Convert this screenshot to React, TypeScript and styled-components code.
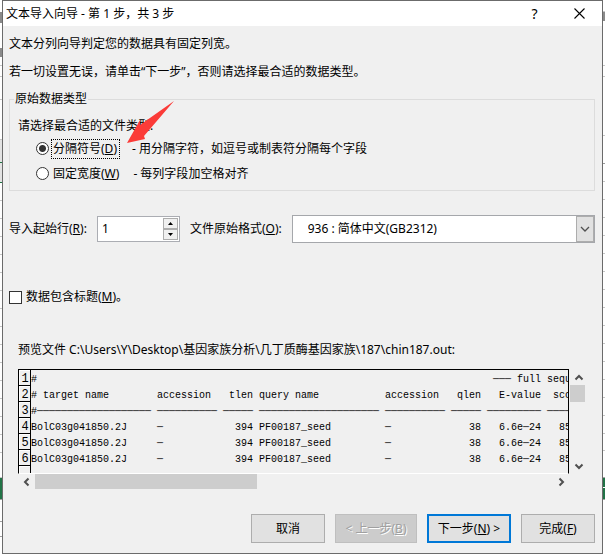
import React from "react";
import styled, { createGlobalStyle, css } from "styled-components";

const GlobalStyle = createGlobalStyle`
  * { box-sizing: border-box; }
  html, body, #root { height: 100%; }
  body {
    margin: 0;
    overflow: hidden;
    background: #fff;
    color: #000;
    font: 12px/16px "Noto Sans", "Noto Sans CJK SC", sans-serif;
  }
  button, input, select { font: inherit; color: inherit; }
`;

const Desktop = styled.div`
  display: flex;
  min-height: 100vh;
  padding-bottom: 2px;
`;

const Gutter = styled.div`
  flex: none;
  width: 2px;
  display: flex;
  flex-direction: column;
  background: #fff;
`;

const Cell = styled.div<{ $h: number; $fill: string; $line: string }>`
  flex: none;
  height: ${(p) => p.$h}px;
  background: ${(p) => p.$fill};
  border-bottom: 1px solid ${(p) => p.$line};
`;

const Dialog = styled.main`
  flex: 1;
  min-width: 0;
  display: flex;
  flex-direction: column;
  background: #f0f0f0;
  border: 1px solid #6b6b6b;
`;

const TitleBar = styled.header`
  display: flex;
  align-items: center;
  height: 25px;
  padding-left: 3px;
  background: #fff;
`;

const Title = styled.h1`
  flex: 1;
  margin: 0;
  font: inherit;
`;

const CaptionButton = styled.button`
  width: 45px;
  height: 25px;
  padding: 0;
  border: 0;
  background: none;
  font-size: 14px;
  display: grid;
  place-items: center;
`;

const Body = styled.form`
  flex: 1;
  display: flex;
  flex-direction: column;
  padding: 10px 7px 10px 6px;
`;

const Intro = styled.div`
  display: grid;
  gap: 12px;
  margin-bottom: 11px;
`;

const Note = styled.p`
  margin: 0;
`;

const Group = styled.fieldset`
  margin: 0;
  padding: 11px 8px 4px;
  border: 1px solid #dcdcdc;
  min-width: 0;
`;

const Legend = styled.legend`
  padding: 0 1px;
  margin-left: -4px;
`;

const Options = styled.div`
  padding: 2px 0 0 18px;
`;

const Option = styled.div`
  display: flex;
  align-items: center;
  height: 25px;
`;

const OptionLabel = styled.label<{ $focused?: boolean }>`
  min-width: 69px;
  padding: 1px;
  margin-left: 2px;
  border: 1px dotted ${(p) => (p.$focused ? "#000" : "transparent")};
`;

const OptionHint = styled.span`
  margin-left: 12px;
`;

const Radio = styled.input.attrs({ type: "radio" })`
  appearance: none;
  flex: none;
  width: 13px;
  height: 13px;
  margin: 0;
  border: 1px solid #333;
  border-radius: 50%;
  background: #fff;
  &:checked {
    background: radial-gradient(circle, #333 0 3px, #fff 4px);
  }
`;

const Check = styled.input.attrs({ type: "checkbox" })`
  appearance: none;
  flex: none;
  width: 13px;
  height: 13px;
  margin: 0;
  border: 1px solid #333;
  background: #fff;
`;

const FieldRow = styled.div`
  display: flex;
  align-items: center;
  gap: 10px;
  margin-top: 24px;
`;

const Spin = styled.div`
  display: flex;
  width: 83px;
  height: 26px;
  flex: none;
  border: 1px solid #abadb3;
  background: #fff;
`;

const SpinInput = styled.input`
  flex: 1;
  min-width: 0;
  padding: 0 4px;
  border: 0;
  background: none;
`;

const SpinButtons = styled.div`
  display: grid;
  grid-template-rows: 1fr 1fr;
  width: 17px;
  padding: 1px;
`;

const SpinButton = styled.button`
  padding: 0;
  border: 1px solid #adadad;
  background: #f0f0f0;
  display: grid;
  place-items: center;
`;

const SelectBox = styled.div`
  flex: 1;
  min-width: 0;
  display: grid;
  grid-template-columns: 1fr 18px;
  height: 28px;
  border: 1px solid #a5a7ab;
  background: #fff;
`;

const Select = styled.select`
  grid-area: 1 / 1 / 2 / 3;
  appearance: none;
  width: 100%;
  border: 0;
  padding: 0 24px 0 15px;
  background: none;
`;

const SelectArrow = styled.span`
  grid-area: 1 / 2 / 2 / 3;
  pointer-events: none;
  display: grid;
  place-items: center;
  border: 1px solid #adadad;
  background: #e1e1e1;
`;

const CheckRow = styled.div`
  display: flex;
  align-items: center;
  gap: 4px;
  margin-top: 46px;
`;

const PreviewTitle = styled.h2`
  margin: 37px 0 0 9px;
  font: inherit;
`;

const Preview = styled.section`
  display: grid;
  grid-template-columns: 1fr 17px;
  grid-template-rows: 105px 15px;
  margin: 11px 9px 0;
`;

const PreviewPane = styled.div`
  overflow: hidden;
  border: 1px solid #000;
  border-bottom-color: #fff;
`;

const DataTable = styled.table`
  border-collapse: separate;
  border-spacing: 0;
  font: 10px/12px "Liberation Mono", monospace;
`;

const RowHead = styled.th`
  min-width: 12px;
  height: 16px;
  padding: 3px 1px 0 2px;
  border: solid #000;
  border-width: 0 1px 1px 0;
  box-shadow: inset 1px 1px #fff;
  font-weight: 400;
  font-size: 12px;
`;

const RowText = styled.td`
  padding: 4px 0 0;
  white-space: pre;
  vertical-align: top;
`;

const Scroll = styled.div<{ $horizontal?: boolean }>`
  display: flex;
  flex-direction: ${(p) => (p.$horizontal ? "row" : "column")};
  ${(p) => !p.$horizontal && css`padding: 1px 0 1px 1px;`}
`;

const ScrollButton = styled.button`
  flex: none;
  width: 17px;
  height: 15px;
  padding: 0;
  border: 0;
  background: none;
  display: grid;
  place-items: center;
`;

const Track = styled.div`
  flex: 1;
`;

const Thumb = styled.div<{ $horizontal?: boolean }>`
  background: #cdcdcd;
  width: ${(p) => (p.$horizontal ? "43%" : "15px")};
  height: ${(p) => (p.$horizontal ? "15px" : "17px")};
`;

const Actions = styled.footer`
  display: flex;
  justify-content: flex-end;
  gap: 10px;
  margin-top: auto;
`;

const Action = styled.button<{ $primary?: boolean }>`
  width: ${(p) => (p.$primary ? 84 : 74)}px;
  height: 29px;
  padding: 0;
  border: ${(p) => (p.$primary ? "2px solid #0078d7" : "1px solid #adadad")};
  background: #e1e1e1;
  &:disabled {
    width: 82px;
    color: #a0a0a0;
    border-color: #bfbfbf;
    background: #ccc;
    text-shadow: 1px 1px #fff;
  }
`;

const Pointer = styled.svg`
  position: absolute;
  left: 127px;
  top: 101px;
  pointer-events: none;
`;

const rule = (n: number) => "─".repeat(n);

const lines = [
  "#" + " ".repeat(76) + "─── full sequ",
  "# target name        accession   tlen query name           accession   qlen   E-value  sco",
  "#" + [19, 10, 5, 20, 10, 5, 9, 4].map(rule).join(" "),
  ...Array(3).fill(
    "BolC03g041850.2J     ─            394 PF00187_seed         ─             38   6.6e─24   85",
  ),
  "",
];

type Band = [height: number, fill: string, line: string];

const gridRows: Band[] = Array.from({ length: 15 }, () => [18, "#fff", "#c6c6c6"]);

const leftBands: Band[] = [
  [12, "#fff", "#fff"],
  [12, "#8a8a8a", "#fff"],
  [24, "#fff", "#fff"],
  [10, "#8a8a8a", "#fff"],
  [8, "#fff", "#c6c6c6"],
  [11, "#fff", "#c6c6c6"],
  [23, "#fff", "#c6c6c6"],
  [40, "#fff", "#c6c6c6"],
  [23, "#e3e3e3", "#217346"],
  [20, "#e3e3e3", "#217346"],
  ...gridRows,
  [25, "#fff", "#c6c6c6"],
  [22, "#217346", "#a0a0a0"],
  [22, "#fff", "#a0a0a0"],
  [15, "#fff", "#a0a0a0"],
];

const rightBands: Band[] = [
  [12, "#fff", "#c6c6c6"],
  [10, "#8a8a8a", "#fff"],
  [44, "#fff", "#c6c6c6"],
  [11, "#fff", "#c6c6c6"],
  [59, "#fff", "#c6c6c6"],
  [28, "#fff", "#9a9a9a"],
  ...gridRows,
  [17, "#fff", "#c6c6c6"],
  [27, "#fff", "#a0a0a0"],
  [10, "#217346", "#fff"],
  [12, "#217346", "#a0a0a0"],
];

const Strip = ({ bands }: { bands: Band[] }) => (
  <Gutter>
    {bands.map(([h, fill, line], i) => (
      <Cell key={i} $h={h} $fill={fill} $line={line} />
    ))}
  </Gutter>
);

const Chevron = ({ turn = 0, heavy = false }: { turn?: number; heavy?: boolean }) => (
  <svg width="10" height="10" viewBox="0 0 10 10" fill="none" stroke="#505050" strokeWidth={heavy ? 2 : 1.3}>
    <path d={heavy ? "M1.500 3.500L5 7l3.500-3.500" : "M1 3l4 4 4-4"} transform={`rotate(${turn} 5 5)`} />
  </svg>
);

const Triangle = ({ up }: { up?: boolean }) => (
  <svg width="5" height="3" viewBox="0 0 5 3">
    <path d={up ? "M0 3L2.500 0 5 3z" : "M0 0h5L2.500 3z"} />
  </svg>
);

export default function App() {
  return (
    <>
      <GlobalStyle />
      <Desktop>
        <Strip bands={leftBands} />
        <Dialog>
          <TitleBar>
            <Title>文本导入向导 - 第 1 步，共 3 步</Title>
            <CaptionButton type="button" aria-label="帮助">?</CaptionButton>
            <CaptionButton type="button" aria-label="关闭">
              <svg width="11" height="11" viewBox="0 0 11 11" stroke="#000" strokeWidth="1.1">
                <path d="M.5.5l10 10M10.500.5l-10 10" />
              </svg>
            </CaptionButton>
          </TitleBar>
          <Body onSubmit={(e) => e.preventDefault()}>
            <Intro>
              <Note>文本分列向导判定您的数据具有固定列宽。</Note>
              <Note>若一切设置无误，请单击“下一步”，否则请选择最合适的数据类型。</Note>
            </Intro>
            <Group>
              <Legend>原始数据类型</Legend>
              <div>请选择最合适的文件类型:</div>
              <Options>
                <Option>
                  <Radio id="delimited" name="kind" defaultChecked />
                  <OptionLabel htmlFor="delimited" $focused>分隔符号(<u>D</u>)</OptionLabel>
                  <OptionHint>- 用分隔字符，如逗号或制表符分隔每个字段</OptionHint>
                </Option>
                <Option>
                  <Radio id="fixed" name="kind" />
                  <OptionLabel htmlFor="fixed">固定宽度(<u>W</u>)</OptionLabel>
                  <OptionHint>- 每列字段加空格对齐</OptionHint>
                </Option>
              </Options>
            </Group>
            <FieldRow>
              <label htmlFor="start">导入起始行(<u>R</u>):</label>
              <Spin>
                <SpinInput id="start" defaultValue="1" />
                <SpinButtons>
                  <SpinButton type="button" aria-label="增加"><Triangle up /></SpinButton>
                  <SpinButton type="button" aria-label="减少"><Triangle /></SpinButton>
                </SpinButtons>
              </Spin>
              <label htmlFor="origin">文件原始格式(<u>O</u>):</label>
              <SelectBox>
                <Select id="origin"><option>936 : 简体中文(GB2312)</option></Select>
                <SelectArrow><Chevron /></SelectArrow>
              </SelectBox>
            </FieldRow>
            <CheckRow>
              <Check id="headers" />
              <label htmlFor="headers">数据包含标题(<u>M</u>)。</label>
            </CheckRow>
            <PreviewTitle>预览文件 C:\Users\Y\Desktop\基因家族分析\几丁质酶基因家族\187\chin187.out:</PreviewTitle>
            <Preview>
              <PreviewPane>
                <DataTable>
                  <tbody>
                    {lines.map((text, i) => (
                      <tr key={i}>
                        <RowHead scope="row">{i < 6 ? i + 1 : ""}</RowHead>
                        <RowText>{text}</RowText>
                      </tr>
                    ))}
                  </tbody>
                </DataTable>
              </PreviewPane>
              <Scroll>
                <ScrollButton type="button" aria-label="向上"><Chevron turn={180} heavy /></ScrollButton>
                <Track><Thumb /></Track>
                <ScrollButton type="button" aria-label="向下"><Chevron heavy /></ScrollButton>
              </Scroll>
              <Scroll $horizontal>
                <ScrollButton type="button" aria-label="向左"><Chevron turn={90} heavy /></ScrollButton>
                <Track><Thumb $horizontal /></Track>
                <ScrollButton type="button" aria-label="向右"><Chevron turn={-90} heavy /></ScrollButton>
              </Scroll>
            </Preview>
            <Actions>
              <Action type="button">取消</Action>
              <Action type="button" disabled>&lt; 上一步(<u>B</u>)</Action>
              <Action type="submit" $primary>下一步(<u>N</u>) &gt;</Action>
              <Action type="button">完成(<u>F</u>)</Action>
            </Actions>
          </Body>
        </Dialog>
        <Strip bands={rightBands} />
      </Desktop>
      <Pointer width="48" height="43" viewBox="0 0 48 43" aria-hidden="true">
        <path d="M47 0L17 35l1 3L0 42 13 19l0 5z" fill="#fb3b38" />
      </Pointer>
    </>
  );
}
